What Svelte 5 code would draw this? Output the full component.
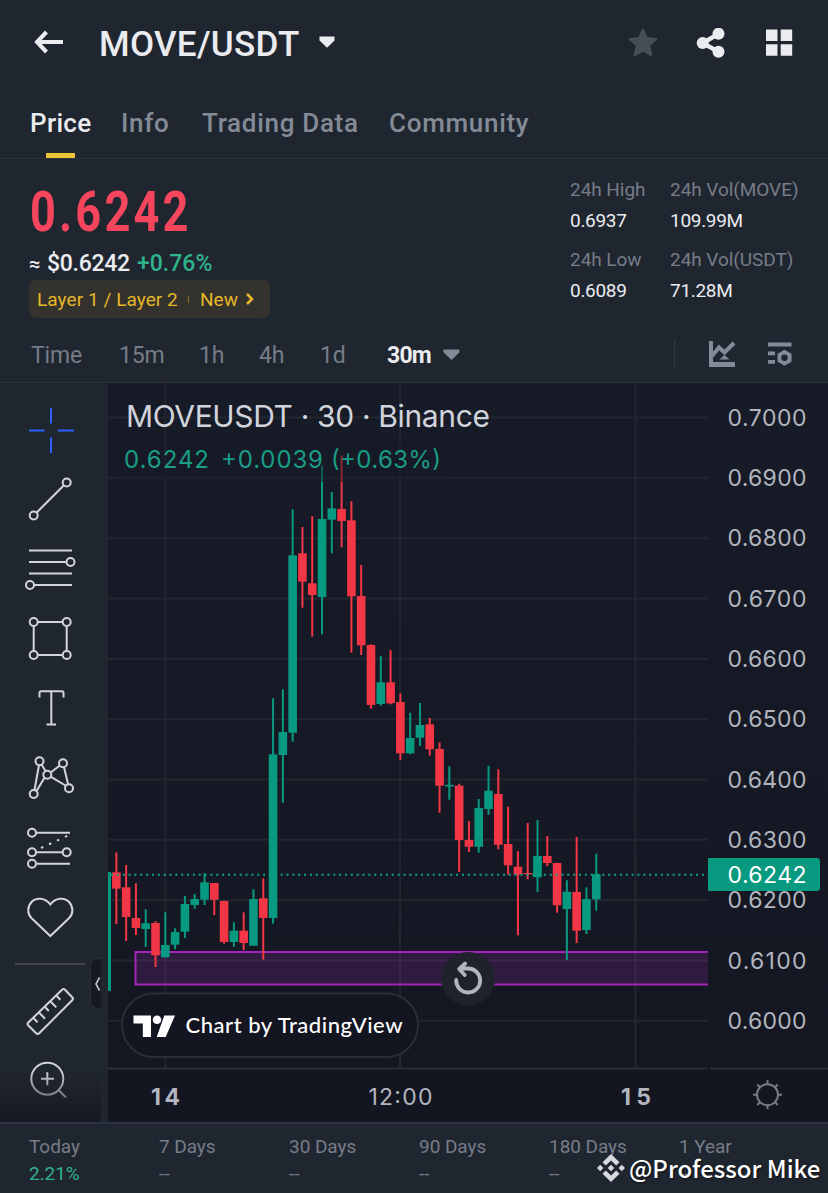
<script lang="ts">
  const tabs = ['Price', 'Info', 'Trading Data', 'Community'];
  const intervals = ['Time', '15m', '1h', '4h', '1d'];

  const stats = [
    { label: '24h High', value: '0.6937' },
    { label: '24h Vol(MOVE)', value: '109.99M' },
    { label: '24h Low', value: '0.6089' },
    { label: '24h Vol(USDT)', value: '71.28M' },
  ];

  const periods = [
    { label: 'Today', value: '2.21%' },
    { label: '7 Days', value: '--' },
    { label: '30 Days', value: '--' },
    { label: '90 Days', value: '--' },
    { label: '180 Days', value: '--' },
    { label: '1 Year', value: '--' },
  ];

  const prices = [
    '0.7000', '0.6900', '0.6800', '0.6700', '0.6600', '0.6500',
    '0.6400', '0.6300', '0.6200', '0.6100', '0.6000',
  ];
  const priceY = (i: number) => 34.5 + i * 60.33;

  // [up, wick top, body top, body bottom, wick bottom], y values in chart space
  const candles: [number, number, number, number, number][] = [
    [0, 469.3, 489.3, 505.7, 541],
    [0, 482, 504.3, 534, 558],
    [0, 500.3, 535, 545, 552],
    [1, 526.3, 540.3, 546, 564],
    [0, 538.3, 540, 572.3, 584],
    [1, 529.3, 562, 574.3, 574.3],
    [1, 545.3, 549, 561.7, 566.3],
    [1, 513, 521, 548.7, 555],
    [1, 511, 516, 522, 525.7],
    [1, 490.3, 499.3, 516.7, 522],
    [0, 500, 500, 516.7, 532],
    [0, 517.7, 518, 559, 560.7],
    [1, 539.3, 547.7, 559, 563.7],
    [0, 529.3, 547.7, 560, 567],
    [1, 506.3, 516, 562.7, 562.7],
    [0, 495.3, 515.3, 535, 576.7],
    [1, 315.3, 371.3, 535, 540.7],
    [1, 306.3, 349, 372, 419.7],
    [1, 126.3, 172.3, 349.7, 358.7],
    [0, 144, 170.3, 198.7, 224.7],
    [0, 133.3, 200.3, 212, 253.7],
    [1, 82.7, 136, 214, 251.3],
    [1, 109, 125.3, 136.7, 170.3],
    [0, 72.3, 126, 138, 164.3],
    [0, 118.3, 137.3, 213.3, 269.7],
    [0, 182, 213, 262.3, 272],
    [0, 261.3, 262, 322, 325.7],
    [1, 273, 299.3, 321, 322.7],
    [0, 267, 299.3, 320.3, 321.3],
    [0, 310.3, 319, 370.3, 377],
    [1, 329.7, 355, 370.3, 371.3],
    [1, 320, 342, 354.7, 363],
    [0, 335, 341.3, 366.3, 372.7],
    [0, 359.3, 366, 402.7, 429.7],
    [1, 383.3, 401.8, 403.5, 416.7],
    [0, 400.7, 402.7, 457, 489],
    [0, 438, 457, 463.7, 469],
    [1, 416, 425, 463.7, 469.7],
    [1, 382.7, 407.7, 426, 431.7],
    [0, 386.3, 411, 461.7, 466.3],
    [0, 423.7, 461, 482.3, 491.7],
    [0, 468.3, 483.7, 491.7, 552.3],
    [0, 440, 490, 491.3, 496.3],
    [1, 437, 473, 494.3, 509],
    [0, 453, 473, 480, 483],
    [0, 479.7, 480, 522.3, 529.7],
    [1, 497.3, 508.7, 526, 577],
    [0, 454, 509, 547.7, 560],
    [1, 504.3, 516, 547, 551],
    [1, 470.7, 491.3, 516.3, 527.7],
  ];
  const candleX = (i: number) => 8.35 + i * 9.794;
</script>

<div class="screen">
  <header>
    <svg class="back" width="30" height="24" viewBox="0 0 30 24">
      <path d="M29 12H4M12.5 2L3 12l9.500 10" />
    </svg>
    <h1>MOVE/USDT</h1>
    <svg class="caret" width="16" height="12" viewBox="0 0 16 12">
      <path d="M.5.500h15v4L8 11.700.5 4.500z" />
    </svg>
    <div class="actions">
      <svg width="30" height="30" viewBox="0 0 30 30">
        <path
          d="M15 1.800l3.700 8.500 9.300.9-7 6.200 2.100 9.600L15 22.500 6.900 27 9 17.400l-7-6.200 9.300-.9z"
          fill="#474d57"
          stroke="#474d57"
          stroke-width="2.400"
          stroke-linejoin="round"
        />
      </svg>
      <svg width="30" height="30" viewBox="0 0 30 30" fill="#eaecef">
        <circle cx="22.500" cy="5.800" r="6" />
        <circle cx="6.700" cy="15" r="6" />
        <circle cx="22.500" cy="23.800" r="6" />
        <path d="M22.500 5.800L6.700 15l15.800 8.800" fill="none" stroke="#eaecef" stroke-width="4.400" />
      </svg>
      <svg width="30" height="30" viewBox="0 0 30 30" fill="#eaecef">
        <path d="M2 1.500h11.500V13H2zM16.700 1.500h11.500V13H16.700zM2 16.200h11.500v11.500H2zM16.700 16.200h11.500v11.500H16.700z" />
      </svg>
    </div>
  </header>

  <nav>
    {#each tabs as tab, i}
      <span class="tab" class:active={i === 0}>{tab}</span>
    {/each}
  </nav>

  <section class="summary">
    <div class="quote">
      <div class="price"><span>0.6242</span></div>
      <div class="fiat">
        <span class="approx">≈</span><span class="usd">$0.6242</span><span class="up">+0.76%</span>
      </div>
      <div class="tag">
        <span class="layer">Layer 1 / Layer 2</span>
        <i></i>
        <span>New</span>
        <svg width="10" height="14" viewBox="0 0 10 14"><path d="M2 2l5 5-5 5" /></svg>
      </div>
    </div>
    <dl>
      {#each stats as stat}
        <div>
          <dt>{stat.label}</dt>
          <dd>{stat.value}</dd>
        </div>
      {/each}
    </dl>
  </section>

  <div class="intervals">
    {#each intervals as interval}
      <span>{interval}</span>
    {/each}
    <b>30m</b>
    <svg width="17" height="12" viewBox="0 0 17 12">
      <path d="M.5.500h16v2.800L8.500 11 .5 3.300z" />
    </svg>
    <div class="chart-tools">
      <svg width="28" height="28" viewBox="0 0 28 28">
        <path d="M1 1h4v21h22v5H1z" />
        <path d="M4 16l7-8.500 5.500 5L26 3" fill="none" stroke="#848b97" stroke-width="4" />
        <path d="M16.500 15l5 4.500h-10z" />
      </svg>
      <svg width="26" height="28" viewBox="0 0 26 28">
        <path d="M1 2.500h23.500v4H1zM1 11.500h7v3.800H1zM1 20h7v3.800H1z" />
        <path
          fill-rule="evenodd"
          d="M17.500 9.800l7 4v8l-7 4-7-4v-8zM17.500 14.600a3.200 3.200 0 1 0 0 6.400 3.200 3.200 0 1 0 0-6.400z"
        />
      </svg>
    </div>
  </div>

  <main>
    <aside>
      <svg class="cross" viewBox="0 0 101 70">
        <path d="M29 35.500h15.500M58 35.500h16M51 13v15.500M51 42.500V58" />
      </svg>
      <svg viewBox="0 0 101 70">
        <path d="M36.700 47.500l27-27" />
        <circle cx="66.700" cy="17.500" r="4" /><circle cx="33.700" cy="50.500" r="4" />
      </svg>
      <svg viewBox="0 0 101 70">
        <path d="M29 15.500h43M29 27h37M29 38.500h43M34 50h38" />
        <circle cx="70.500" cy="27" r="4" /><circle cx="30" cy="50" r="4" />
      </svg>
      <svg viewBox="0 0 101 70">
        <path d="M38 17h24.500M38 50h24.500M33.700 21v25M66.700 21v25" />
        <circle cx="33.700" cy="17" r="4" /><circle cx="66.700" cy="17" r="4" />
        <circle cx="33.700" cy="50" r="4" /><circle cx="66.700" cy="50" r="4" />
      </svg>
      <svg viewBox="0 0 101 70">
        <path d="M39.500 22.500V18q0-1.700 1.700-1.700H62q1.500 0 1.500 1.700v4.500M51.300 16v33.500M46.500 49.500H56" />
      </svg>
      <svg viewBox="0 0 101 70">
        <path d="M34.500 45l4.500-25M41.500 19.500l4 6.500M51 27.200l8.500-6.500M64 22l4 17M51 31.800l14.500 8.700M44.500 32.800L36.500 46" />
        <circle cx="39.500" cy="16.200" r="4" /><circle cx="63" cy="18.200" r="4" />
        <circle cx="47.300" cy="29.700" r="4" /><circle cx="69" cy="43.200" r="4" />
        <circle cx="33.700" cy="49" r="4" />
      </svg>
      <svg viewBox="0 0 101 70">
        <path d="M36 17.700h34M36 37.200h26.500M36 48.700h34" />
        <path d="M41 33l27-12.500" stroke-dasharray="2.500 6.300" />
        <circle cx="32" cy="17.700" r="4" /><circle cx="32" cy="37.200" r="4" />
        <circle cx="66.700" cy="37.200" r="4" /><circle cx="32" cy="48.700" r="4" />
      </svg>
      <svg viewBox="0 0 101 70">
        <path d="M50.300 19.500C45.500 12.500 36 12 31.500 17c-4.600 5-4.100 12-.1 16l18.900 18 18.900-18c4-4 4.500-11-.1-16-4.500-5-14-4.500-18.800 2.500z" />
      </svg>
      <hr />
      <svg viewBox="0 0 101 70">
        <path d="M62 12.700q1.500-1.500 3 0l7.200 7.600q1.500 1.500 0 3L39.200 56.200q-1.500 1.500-3 0l-7.900-7.700q-1.500-1.500 0-3z" />
        <path d="M33.500 41l4 4.200M39 35.500l6 6.200M44.800 29.800l4 4.200M50.300 24.200l6 6.200M56.300 18.500l4 4.200" />
      </svg>
      <svg viewBox="0 0 101 70">
        <circle cx="47.300" cy="31.700" r="16" />
        <path d="M41 31.700h13M47.300 25.200v13M59 43.500l7 7" />
      </svg>
      <div class="fade"></div>
      <button aria-label="Hide toolbar">
        <svg width="8" height="16" viewBox="0 0 8 16"><path d="M6.500 1.500L3 8l3.500 6.500" /></svg>
      </button>
    </aside>

    <svg class="chart" viewBox="0 0 720 739">
      <g class="grid">
        {#each prices as _, i}
          <line x1="0" x2="600" y1={priceY(i)} y2={priceY(i)} />
        {/each}
        {#each [57.3, 292, 527.5] as x}
          <line x1={x} x2={x} y1="0" y2="685" />
        {/each}
      </g>

      <path d="M600 569H27.500v32.500H600" class="zone" />

      <rect x="0" y="489" width="3" height="119" class="up" />
      {#each candles as [up, high, top, bottom, low], i}
        <g class={up ? 'up' : 'down'}>
          <rect x={candleX(i) - 1} y={high} width="2" height={low - high} />
          <rect x={candleX(i) - 4.3} y={top} width="8.600" height={bottom - top} />
        </g>
      {/each}
      <line x1="3" x2="600" y1="491.700" y2="491.700" class="last" />

      <rect x="10" y="58" width="335" height="41" fill="#161a25" opacity=".5" />
      <text class="symbol" x="18" y="44" textLength="364">MOVEUSDT · 30 · Binance</text>
      <g class="change">
        <text x="16" y="85" textLength="85">0.6242</text>
        <text x="113" y="85" textLength="102">+0.0039</text>
        <text x="223" y="85" textLength="110">(+0.63%)</text>
      </g>

      <g class="axis">
        {#each prices as price, i}
          <text x="619.500" y={priceY(i) + 8.3} textLength="79">{price}</text>
        {/each}
      </g>
      <path d="M600 475h109q3 0 3 3v27q0 3-3 3H600z" class="up" />
      <text class="current" x="619.500" y="500" textLength="79">0.6242</text>

      <rect x="0" y="685" width="720" height="54" fill="#131520" />
      <path d="M0 685.500h600M602 685.500h118" stroke="#2a2e39" stroke-width="2" />
      <g class="axis">
        <text class="day" x="43" y="722" textLength="29">14</text>
        <text x="260.500" y="722" textLength="64">12:00</text>
        <text class="day" x="513" y="722" textLength="30">15</text>
      </g>
      <g class="sun" transform="translate(659.500 711.700)">
        <circle r="10.500" />
        {#each [0, 45, 90, 135, 180, 225, 270, 315] as angle}
          <path d="M0-10.500V-14.500" transform="rotate({angle})" />
        {/each}
      </g>

      <rect x="14" y="610.500" width="296" height="63.500" rx="31.700" class="pill" />
      <g fill="#fff">
        <path d="M25.500 632.500H43V654h-8.200v-13.500h-9.300zM56.300 632.500H67L57.700 654h-9z" />
        <circle cx="49" cy="636.700" r="4.300" />
        <text class="brand" x="77.500" y="650" textLength="217">Chart by TradingView</text>
      </g>

      <circle cx="360" cy="596" r="27" fill="#1f222d" />
      <path class="reset" d="M348.200 597a12 12 0 1 0 12-11.500h-8.500M357.200 580.500l-6 5.500 5.500 6" />
    </svg>
  </main>

  <footer>
    {#each periods as period, i}
      <div>
        <span>{period.label}</span>
        <span class:gain={i === 0}>{period.value}</span>
      </div>
    {/each}
  </footer>

  <div class="watermark">
    <svg width="28" height="28" viewBox="0 0 28 28">
      <path d="M14 0l8.500 8.300-3.300 3.300L14 6.500l-5.200 5.100-3.300-3.300zM14 28l8.500-8.300-3.300-3.300-5.200 5.100-5.200-5.100-3.300 3.300zM14 10.700l3.300 3.300-3.300 3.300-3.300-3.300zM3.200 10.800L6.400 14l-3.200 3.200L0 14zM24.800 10.800L28 14l-3.200 3.200-3.200-3.200z" />
    </svg>
    <span>@Professor Mike</span>
  </div>
</div>

<style>
  :global(body) {
    background: #202630;
  }
  .screen {
    position: relative;
    width: 828px;
    height: 1193px;
    overflow: hidden;
    background: #202630;
    color: #eaecef;
    font-family: Roboto, 'Liberation Sans', sans-serif;
    display: flex;
    flex-direction: column;
  }
  svg {
    display: block;
    flex: none;
  }

  header {
    height: 86px;
    display: flex;
    align-items: center;
    padding: 0 34px;
  }
  .back {
    margin-top: -2px;
    fill: none;
    stroke: #eaecef;
    stroke-width: 4;
  }
  h1 {
    margin: 3px 21px 0 35px;
    width: 199px;
    font-size: 35px;
    font-weight: 500;
    line-height: 44px;
    letter-spacing: 0.3px;
    white-space: nowrap;
  }
  .caret {
    fill: #eaecef;
    margin-top: -2px;
  }
  .actions {
    margin-left: auto;
    display: flex;
    gap: 38px;
  }

  nav {
    box-sizing: border-box;
    height: 73px;
    padding: 17px 0 0 30px;
    display: grid;
    grid-template-columns: 91px 81px 187px auto;
    border-bottom: 1px solid #2b303b;
    white-space: nowrap;
  }
  .tab {
    position: relative;
    font-size: 26px;
    font-weight: 500;
    line-height: 40px;
    letter-spacing: 0.7px;
    color: #848b97;
  }
  .tab.active {
    color: #eaecef;
    letter-spacing: 0.3px;
  }
  .tab.active::after {
    content: '';
    position: absolute;
    left: 16px;
    bottom: 0;
    width: 29px;
    height: 5px;
    background: #ecc436;
  }

  .summary {
    height: 169px;
    display: flex;
    justify-content: space-between;
  }
  .quote {
    padding: 24px 0 0 29px;
  }
  .price {
    height: 58px;
    line-height: 58px;
    font-size: 55px;
    font-weight: 700;
    color: #f6465d;
  }
  .price span {
    display: inline-block;
    transform: scaleX(0.82);
    transform-origin: 0 50%;
    margin-left: 1px;
    letter-spacing: 3.9px;
  }
  .fiat {
    margin-top: 8px;
    height: 30px;
    line-height: 30px;
    display: flex;
    font-size: 23px;
    font-weight: 500;
  }
  .approx {
    width: 18px;
    font-size: 20px;
  }
  .usd {
    width: 90px;
    letter-spacing: -0.3px;
  }
  .fiat .up {
    color: #2fb38b;
  }
  .tag {
    margin-top: 1px;
    width: 233px;
    height: 38px;
    padding-left: 8px;
    display: flex;
    align-items: center;
    border-radius: 7px;
    background: #34322c;
    color: #e6b729;
    font-size: 19px;
    letter-spacing: 0.07px;
    white-space: nowrap;
  }
  .layer {
    width: 142px;
  }
  .tag i {
    width: 1px;
    height: 7px;
    margin: 0 11px 0 9px;
    background: #8a7128;
  }
  .tag svg {
    margin-left: 7px;
    fill: none;
    stroke: #e6b729;
    stroke-width: 2.6;
  }
  dl {
    margin: 0;
    padding: 15px 0 0;
    width: 258px;
    display: grid;
    grid-template-columns: 100px auto;
    grid-auto-rows: 70px;
    font-size: 19px;
    line-height: 31px;
    letter-spacing: -0.05px;
    white-space: nowrap;
  }
  dt {
    color: #767c88;
  }
  dd {
    margin: 0;
    letter-spacing: -0.3px;
  }

  .intervals {
    box-sizing: border-box;
    height: 55px;
    padding: 0 35px 0 31px;
    display: grid;
    grid-template-columns: 88px 80px 60px 61px 67px 56px 17px auto;
    align-items: center;
    border-bottom: 1px solid #2b303b;
    font-size: 23px;
    color: #767c88;
    fill: #848b97;
  }
  .intervals span,
  .intervals b {
    letter-spacing: -0.2px;
    padding-top: 1px;
  }
  .intervals b {
    color: #eaecef;
    font-weight: 700;
    letter-spacing: -0.8px;
  }
  .chart-tools {
    justify-self: end;
    display: flex;
    align-items: center;
    height: 30px;
    gap: 31px;
    margin-top: -2px;
    padding-left: 33px;
    border-left: 1px solid #343a45;
  }

  main {
    height: 739px;
    display: flex;
    border-bottom: 2px solid #2e343f;
  }
  aside {
    position: relative;
    width: 101px;
    padding: 12px 0 0;
    margin-right: 7px;
  }
  aside > svg {
    width: 101px;
    height: 70px;
    fill: none;
    stroke: #d1d4dc;
    stroke-width: 2;
  }
  aside > .cross {
    stroke: #2962ff;
  }
  hr {
    width: 70px;
    height: 2px;
    margin: 8px 0 12px 15px;
    border: 0;
    background: #434651;
  }
  .fade {
    position: absolute;
    left: 0;
    right: 0;
    bottom: 0;
    height: 52px;
    background: linear-gradient(rgba(22, 25, 36, 0), rgba(22, 25, 36, 0.95));
  }
  aside button {
    position: absolute;
    right: 0;
    top: 575px;
    width: 11px;
    height: 51px;
    padding: 0 0 0 2px;
    border: 1px solid #2a2e39;
    border-right: 0;
    border-radius: 8px 0 0 8px;
    background: #151924;
  }
  aside button path {
    fill: none;
    stroke: #c3c6ce;
    stroke-width: 1.6;
  }

  .chart {
    width: 720px;
    height: 739px;
    background: linear-gradient(#171b27, #141722);
    font-family: Inter, 'Liberation Sans', sans-serif;
  }
  .grid line {
    stroke: #222630;
    stroke-width: 2;
  }
  .zone {
    fill: rgba(156, 39, 176, 0.2);
    stroke: #a324b8;
    stroke-width: 2;
  }
  .chart .up {
    fill: #089981;
  }
  .chart .down {
    fill: #f23645;
  }
  .last {
    stroke: #12a38a;
    stroke-width: 2;
    stroke-dasharray: 2 3.85;
  }
  .symbol {
    font-size: 30px;
    fill: #d1d4dc;
  }
  .change {
    font-size: 24px;
    fill: #1a9c86;
  }
  .axis {
    font-size: 23px;
    fill: #b2b5be;
  }
  .day {
    font-weight: 700;
  }
  .current {
    font-size: 23px;
    fill: #fff;
  }
  .sun {
    fill: none;
    stroke: #787b86;
    stroke-width: 2;
  }
  .pill {
    fill: #131520;
    stroke: #2a2e39;
    stroke-width: 2;
  }
  .brand {
    font-family: Lato, sans-serif;
    font-size: 22px;
    font-weight: 500;
  }
  .reset {
    fill: none;
    stroke: #b2b5be;
    stroke-width: 3.8;
    stroke-linecap: round;
    stroke-linejoin: round;
  }

  footer {
    flex: 1;
    padding: 9px 0 0 29px;
    display: grid;
    grid-template-columns: 130px 130px 130px 130px 130px auto;
    font-size: 19px;
    line-height: 27px;
    letter-spacing: -0.05px;
    color: #767c88;
    white-space: nowrap;
  }
  footer div {
    display: flex;
    flex-direction: column;
  }
  footer .gain {
    color: #2fb38b;
  }

  .watermark {
    position: absolute;
    left: 597px;
    top: 1150px;
    height: 36px;
    display: flex;
    align-items: center;
    gap: 4px;
    font-family: 'Noto Sans CJK SC', sans-serif;
    font-size: 24px;
    font-weight: 500;
    line-height: 36px;
    color: #fff;
    white-space: nowrap;
    text-shadow: 1px 1px 2px rgba(0, 0, 0, 0.6);
  }
  .watermark svg {
    fill: #d6d8db;
  }
</style>
